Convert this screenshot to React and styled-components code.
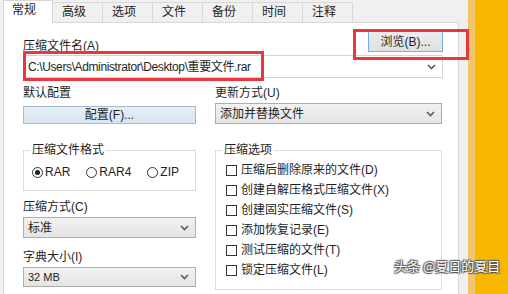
import React from "react";
import styled, { createGlobalStyle } from "styled-components";

const Global = createGlobalStyle`
  html, body { margin: 0; padding: 0; }
  body {
    width: 508px; height: 294px; overflow: hidden;
    background: #f0f0f0;
    font-family: "Liberation Sans", "Noto Sans CJK SC", sans-serif;
    font-size: 12px; color: #1e1e1e;
  }
`;

const Screen = styled.div`
  position: relative;
  display: flex;
  width: 508px;
  height: 294px;
  overflow: hidden;
`;
const Dialog = styled.div`
  width: 468px; flex: none;
  background: #f0f0f0;
  display: flex; flex-direction: column;
`;
const Edge = styled.div`width: 7px; flex: none; background: #f1c66e;`;
const Desktop = styled.div`flex: 1; background: #f8b700;`;

const TabBar = styled.div`
  display: flex; align-items: flex-end;
  height: 22px; padding-left: 3px;
  position: relative; z-index: 1;
`;
const Tab = styled.div`
  box-sizing: border-box;
  width: ${p => (p.$first ? "50px" : "51px")};
  margin-left: ${p => (p.$first ? "0" : "-1px")};
  height: ${p => (p.$active ? "23px" : "20px")};
  margin-bottom: ${p => (p.$active ? "-1px" : "0")};
  padding: 2px 0 0 ${p => (p.$active ? "8px" : "9px")};
  line-height: 14px;
  background: ${p => (p.$active ? "#ffffff" : "#f0f0f0")};
  border: 1px solid #d9d9d9;
  border-bottom: none;
  color: #1e1e1e;
`;

const Panel = styled.div`
  flex: 1;
  box-sizing: border-box;
  width: 456px;
  margin-left: 3px;
  background: #ffffff;
  border: 1px solid #d9d9d9;
  border-bottom: none;
  padding: 8px 15px 0 19px;
`;

const Header = styled.div`
  display: flex; justify-content: space-between;
  height: 22px;
`;
const Label = styled.div`
  line-height: 14px;
  white-space: nowrap;
  align-self: ${p => (p.$bottom ? "flex-end" : "auto")};
  margin-top: ${p => p.$mt || 0}px;
`;
const PushButton = styled.div`
  box-sizing: border-box;
  display: flex; align-items: center; justify-content: center;
  height: ${p => p.$h}px;
  width: ${p => p.$w || "auto"};
  margin-top: ${p => p.$mt || 0}px;
  border: 1px solid ${p => (p.$focus ? "#74aee6" : "#a3bcd6")};
  background: ${p => (p.$focus ? "linear-gradient(#ececec, #e0e0e0)" : "linear-gradient(#e6eef7, #d9e4f0)")};
  line-height: 14px;
  white-space: nowrap;
`;

const Combo = styled.div`
  box-sizing: border-box;
  display: flex; align-items: center; justify-content: space-between;
  height: ${p => p.$h}px;
  margin-top: ${p => p.$mt || 0}px;
  padding: 0 6px 0 4px;
  border: 1px solid ${p => (p.$white ? "#d2d2d2" : "#adadad")};
  background: ${p => (p.$white ? "#ffffff" : "linear-gradient(#f2f2f2, #e4e4e4)")};
  font-size: ${p => p.$fs || 12}px;
  letter-spacing: ${p => (p.$tight ? "-0.38px" : "normal")};
  line-height: 14px;
  white-space: nowrap;
  color: #1e1e1e;
`;

const Chevron = () => (
  <svg width="9" height="6" viewBox="0 0 9 6">
    <polyline points="1,1 4.5,4.5 8,1" fill="none" stroke="#5a5a5a" strokeWidth="1.6" />
  </svg>
);

const Columns = styled.div`
  display: grid;
  grid-template-columns: 173px 227px;
  column-gap: 19px;
  margin-top: 8px;
`;
const Column = styled.div`display: flex; flex-direction: column;`;

const Group = styled.fieldset`
  margin: ${p => p.$mt || 0}px 0 0 0;
  padding: 0;
  min-width: 0;
  border: 1px solid #dcdcdc;
`;
const Legend = styled.legend`
  margin-left: 6px;
  padding: 0 2px;
  line-height: 16px;
`;

const RadioRow = styled.div`
  display: flex; align-items: center; gap: 16px;
  height: 16px;
  padding: 6px 0 10px 8px;
`;
const Choice = styled.div`display: flex; align-items: center; gap: 2px; line-height: 14px; white-space: nowrap;`;
const Radio = styled.span`
  box-sizing: border-box;
  width: 11px; height: 11px; border-radius: 50%;
  border: 1px solid #333;
  background: #fff;
  display: flex; align-items: center; justify-content: center;
  &::after {
    content: "";
    width: 5px; height: 5px; border-radius: 50%;
    background: ${p => (p.$on ? "#1a1a1a" : "transparent")};
  }
`;

const CheckList = styled.div`
  display: flex; flex-direction: column; gap: 4px;
  padding: 4px 0 11px 10px;
`;
const CheckRow = styled.div`
  display: flex; align-items: center; gap: 4px;
  height: 16px; line-height: 14px; white-space: nowrap;
`;
const Box = styled.span`
  box-sizing: border-box;
  width: 11px; height: 11px;
  border: 1px solid #333;
  background: #fff;
`;

const Annotation = styled.div`
  position: absolute;
  box-sizing: border-box;
  border: 3px solid #e8383d;
  left: ${p => p.$x}px; top: ${p => p.$y}px;
  width: ${p => p.$w}px; height: ${p => p.$h}px;
  pointer-events: none;
`;
const Watermark = styled.div`
  position: absolute;
  left: 394px; top: 257px;
  font-family: "Noto Sans CJK SC", sans-serif;
  font-size: 13px;
  line-height: 18px;
  color: #ffffff;
  white-space: nowrap;
  text-shadow: 0 0 1px #444, 1px 1px 1px #555, -1px -1px 1px #666, 1px -1px 1px #666, -1px 1px 1px #666;
`;

const tabs = ["常规", "高级", "选项", "文件", "备份", "时间", "注释"];
const options = [
  "压缩后删除原来的文件(D)",
  "创建自解压格式压缩文件(X)",
  "创建固实压缩文件(S)",
  "添加恢复记录(E)",
  "测试压缩的文件(T)",
  "锁定压缩文件(L)",
];

export default function App() {
  return (
    <>
      <Global />
      <Screen>
        <Dialog>
          <TabBar>
            {tabs.map((t, i) => (
              <Tab key={t} $first={i === 0} $active={i === 0}>{t}</Tab>
            ))}
          </TabBar>
          <Panel>
            <Header>
              <Label $bottom>压缩文件名(A)</Label>
              <PushButton $focus $h={21} $w="75px">浏览(B)...</PushButton>
            </Header>
            <Combo $white $tight $h={23} $mt={2}>
              <span>C:\Users\Administrator\Desktop\重要文件.rar</span>
              <Chevron />
            </Combo>
            <Columns>
              <Column>
                <Label>默认配置</Label>
                <PushButton $h={18} $mt={6}>配置(F)...</PushButton>
                <Group $mt={18}>
                  <Legend>压缩文件格式</Legend>
                  <RadioRow>
                    <Choice><Radio $on />RAR</Choice>
                    <Choice><Radio />RAR4</Choice>
                    <Choice><Radio />ZIP</Choice>
                  </RadioRow>
                </Group>
                <Label $mt={9}>压缩方式(C)</Label>
                <Combo $h={21} $mt={3}>
                  <span>标准</span>
                  <Chevron />
                </Combo>
                <Label $mt={12}>字典大小(I)</Label>
                <Combo $h={20} $mt={3} $fs={11}>
                  <span>32 MB</span>
                  <Chevron />
                </Combo>
              </Column>
              <Column>
                <Label>更新方式(U)</Label>
                <Combo $h={21} $mt={3}>
                  <span>添加并替换文件</span>
                  <Chevron />
                </Combo>
                <Group $mt={18}>
                  <Legend>压缩选项</Legend>
                  <CheckList>
                    {options.map(o => (
                      <CheckRow key={o}><Box />{o}</CheckRow>
                    ))}
                  </CheckList>
                </Group>
              </Column>
            </Columns>
          </Panel>
        </Dialog>
        <Edge />
        <Desktop />
        <Annotation $x={23} $y={51} $w={241} $h={30} />
        <Annotation $x={353} $y={29} $w={116} $h={31} />
        <Watermark>头条 @夏日的夏目</Watermark>
      </Screen>
    </>
  );
}
